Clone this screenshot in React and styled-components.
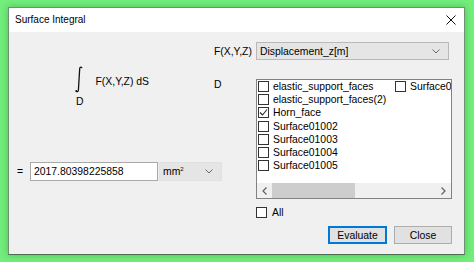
import React from "react";
import styled, { createGlobalStyle } from "styled-components";

const Global = createGlobalStyle`
  html, body { margin: 0; padding: 0; }
  body {
    background: #72ee7c;
    width: 474px;
    height: 262px;
    overflow: hidden;
    font-family: "Liberation Sans", Arial, sans-serif;
  }
`;

const Window = styled.div`
  margin: 7px 0 0 8px;
  width: 457px;
  height: 248px;
  box-sizing: border-box;
  border: 1px solid #6f8f72;
  border-bottom-color: #4d6e50;
  box-shadow: 0 0 7px rgba(20, 90, 25, 0.35);
  display: flex;
  flex-direction: column;
  background: #f0f0f0;
`;

const TitleBar = styled.div`
  height: 24px;
  background: #ffffff;
  display: flex;
  align-items: center;
  justify-content: space-between;
  padding: 0 8px 0 6px;
  flex-shrink: 0;
`;

const Title = styled.span`
  font-size: 10px;
  color: #000;
  margin-top: -1px;
`;

const Client = styled.div`
  flex: 1;
  display: flex;
  font-size: 10.4px;
  color: #000;
`;

const LeftPane = styled.div`
  width: 205px;
  flex-shrink: 0;
  display: flex;
  flex-direction: column;
  padding-top: 34px;
`;

const IntegralBlock = styled.div`
  display: flex;
  align-items: flex-start;
  margin-left: 66px;
`;

const IntegralColumn = styled.div`
  display: flex;
  flex-direction: column;
  align-items: flex-start;
`;

const DomainLabel = styled.span`
  line-height: 11px;
  margin-top: 3px;
  margin-left: 1px;
`;

const Expression = styled.span`
  line-height: 12px;
  margin: 10px 0 0 12px;
`;

const ResultRow = styled.div`
  display: flex;
  align-items: center;
  margin-top: 55px;
  padding-left: 8px;
  width: 220px;
`;

const Equals = styled.span`
  width: 13px;
  flex-shrink: 0;
`;

const TextBox = styled.div`
  width: 128px;
  height: 19px;
  box-sizing: border-box;
  border: 1px solid #a9a9a9;
  background: #fff;
  display: flex;
  align-items: center;
  padding-left: 3px;
`;

const DropDown = styled.div`
  width: ${(p) => p.$width}px;
  height: ${(p) => p.$height}px;
  margin-left: ${(p) => p.$gap || 0}px;
  box-sizing: border-box;
  border: 1px solid ${(p) => (p.$flat ? "#e1e1e1" : "#b9b9b9")};
  background: #e5e5e5;
  display: flex;
  align-items: center;
  justify-content: space-between;
  padding: 0 8px 0 3px;
  flex-shrink: 0;
`;

const Sup = styled.sup`
  font-size: 6px;
  vertical-align: 4px;
`;

const RightPane = styled.div`
  flex: 1;
  display: flex;
  flex-direction: column;
  padding-top: 10px;
  padding-right: 13px;
`;

const FieldRow = styled.div`
  display: flex;
  align-items: ${(p) => (p.$top ? "flex-start" : "center")};
  margin-top: ${(p) => p.$mt || 0}px;
`;

const FieldLabel = styled.span`
  width: 42px;
  flex-shrink: 0;
  line-height: 11px;
`;

const ListBox = styled.div`
  width: 196px;
  height: 120px;
  box-sizing: border-box;
  border: 1px solid #828282;
  background: #fff;
  display: flex;
  flex-direction: column;
`;

const ListItems = styled.div`
  flex: 1;
  overflow: hidden;
  display: grid;
  grid-auto-flow: column;
  grid-template-rows: repeat(7, 13.2px);
  grid-auto-columns: 137px;
  padding-left: 1px;
  align-content: start;
`;

const Item = styled.div`
  display: flex;
  align-items: center;
  white-space: nowrap;
  gap: 4px;
`;

const Box = styled.span`
  width: 11px;
  height: 11px;
  box-sizing: border-box;
  border: 1px solid #333;
  background: #fff;
  flex-shrink: 0;
  display: flex;
  align-items: center;
  justify-content: center;
`;

const HScroll = styled.div`
  height: 15px;
  background: #f0f0f0;
  display: flex;
  align-items: stretch;
  flex-shrink: 0;
`;

const ArrowBtn = styled.div`
  width: 15px;
  display: flex;
  align-items: center;
  justify-content: center;
  flex-shrink: 0;
`;

const Track = styled.div`
  flex: 1;
  display: flex;
`;

const Thumb = styled.div`
  width: 83px;
  background: #cdcdcd;
`;

const AllRow = styled.div`
  display: flex;
  align-items: center;
  gap: 5px;
  margin: 8px 0 0 42px;
  height: 11px;
`;

const Buttons = styled.div`
  display: flex;
  justify-content: flex-end;
  gap: 7px;
  margin-top: 8px;
`;

const Button = styled.div`
  width: ${(p) => p.$width}px;
  height: 18px;
  box-sizing: border-box;
  background: #e1e1e1;
  border: ${(p) => (p.$default ? "2px solid #0078d7" : "1px solid #adadad")};
  display: flex;
  align-items: center;
  justify-content: center;
`;

const Chevron = () => (
  <svg width="8" height="5" viewBox="0 0 8 5">
    <polyline points="0.5,0.5 4,4 7.5,0.5" fill="none" stroke="#6a6a6a" strokeWidth="1" />
  </svg>
);

const Check = () => (
  <svg width="9" height="9" viewBox="0 0 9 9">
    <polyline points="1,4.5 3.5,7 8,1.5" fill="none" stroke="#222" strokeWidth="1.1" />
  </svg>
);

const CheckBox = ({ checked }) => <Box>{checked && <Check />}</Box>;

const items = [
  ["elastic_support_faces", false],
  ["elastic_support_faces(2)", false],
  ["Horn_face", true],
  ["Surface01002", false],
  ["Surface01003", false],
  ["Surface01004", false],
  ["Surface01005", false],
  ["Surface0", false],
];

export default function App() {
  return (
    <>
      <Global />
      <Window>
        <TitleBar>
          <Title>Surface Integral</Title>
          <svg width="10" height="10" viewBox="0 0 10 10">
            <path d="M0.5 0.5 L9.5 9.5 M9.5 0.5 L0.5 9.5" stroke="#111" strokeWidth="1" />
          </svg>
        </TitleBar>
        <Client>
          <LeftPane>
            <IntegralBlock>
              <IntegralColumn>
                <svg width="8" height="27" viewBox="0 0 8 27">
                  <path
                    d="M7 2.2 C6.6 0.6 5 0.8 4.7 2.5 L3.4 24.2 C3.2 26 1.6 26.3 1 24.6"
                    fill="none"
                    stroke="#111"
                    strokeWidth="1.3"
                  />
                  <circle cx="1.3" cy="24.9" r="0.9" fill="#111" />
                </svg>
                <DomainLabel>D</DomainLabel>
              </IntegralColumn>
              <Expression>F(X,Y,Z) dS</Expression>
            </IntegralBlock>
            <ResultRow>
              <Equals>=</Equals>
              <TextBox>2017.80398225858</TextBox>
              <DropDown $width={63} $height={19} $gap={1} $flat>
                <span>
                  mm<Sup>2</Sup>
                </span>
                <Chevron />
              </DropDown>
            </ResultRow>
          </LeftPane>
          <RightPane>
            <FieldRow>
              <FieldLabel>F(X,Y,Z)</FieldLabel>
              <DropDown $width={193} $height={18}>
                <span>Displacement_z[m]</span>
                <Chevron />
              </DropDown>
            </FieldRow>
            <FieldRow $top $mt={19}>
              <FieldLabel>D</FieldLabel>
              <ListBox>
                <ListItems>
                  {items.map(([name, checked]) => (
                    <Item key={name}>
                      <CheckBox checked={checked} />
                      <span>{name}</span>
                    </Item>
                  ))}
                </ListItems>
                <HScroll>
                  <ArrowBtn>
                    <svg width="5" height="8" viewBox="0 0 5 8">
                      <polyline points="4.5,0.5 1,4 4.5,7.5" fill="none" stroke="#606060" strokeWidth="1.2" />
                    </svg>
                  </ArrowBtn>
                  <Track>
                    <Thumb />
                  </Track>
                  <ArrowBtn>
                    <svg width="5" height="8" viewBox="0 0 5 8">
                      <polyline points="0.5,0.5 4,4 0.5,7.5" fill="none" stroke="#606060" strokeWidth="1.2" />
                    </svg>
                  </ArrowBtn>
                </HScroll>
              </ListBox>
            </FieldRow>
            <AllRow>
              <CheckBox />
              <span>All</span>
            </AllRow>
            <Buttons>
              <Button $width={59} $default>
                Evaluate
              </Button>
              <Button $width={58}>Close</Button>
            </Buttons>
          </RightPane>
        </Client>
      </Window>
    </>
  );
}
